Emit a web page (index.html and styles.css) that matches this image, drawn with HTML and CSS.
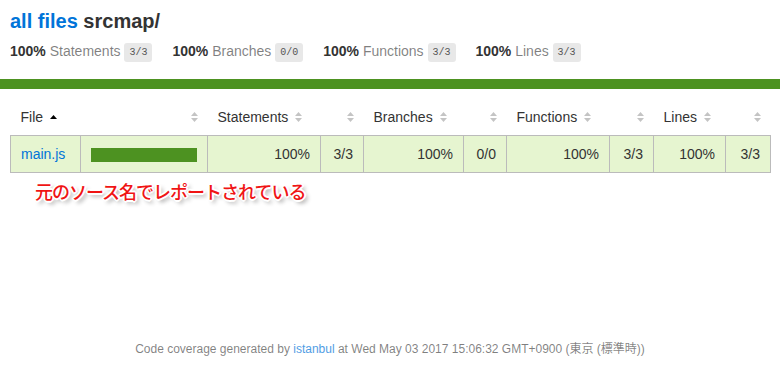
FILE: index.html
```html
<!DOCTYPE html>
<html lang="en">
<head>
    <meta charset="UTF-8">
    <title>Code coverage report for srcmap/</title>
    <link rel="stylesheet" href="styles.css">
</head>
<body>
    <div class="wrapper">
        <div class="pad1">
            <h1><a href="#">all files</a> srcmap/</h1>
            <div class="summary">
                <div class="summary-item"><span class="strong">100%</span> <span class="quiet">Statements</span> <span class="fraction">3/3</span></div>
                <div class="summary-item"><span class="strong">100%</span> <span class="quiet">Branches</span> <span class="fraction">0/0</span></div>
                <div class="summary-item"><span class="strong">100%</span> <span class="quiet">Functions</span> <span class="fraction">3/3</span></div>
                <div class="summary-item"><span class="strong">100%</span> <span class="quiet">Lines</span> <span class="fraction">3/3</span></div>
            </div>
        </div>
        <div class="status-line"></div>
        <div class="pad1">
            <table class="coverage-summary">
                <colgroup>
                    <col class="c-file"><col class="c-pic">
                    <col class="c-stmt"><col class="c-abs">
                    <col class="c-branch"><col class="c-abs">
                    <col class="c-func"><col class="c-abs2">
                    <col class="c-lines"><col class="c-abs3">
                </colgroup>
                <thead>
                    <tr>
                        <th class="file">File<span class="sorter"><svg width="7" height="10" viewBox="0 0 7 10"><path d="M3.5 3L7 7H0z" fill="#000"/></svg></span></th>
                        <th class="pic"><span class="sorter"><svg width="7" height="10" viewBox="0 0 7 10"><path d="M3.5 0L7 4H0zM0 6h7L3.5 10z" fill="#c4c4c4"/></svg></span></th>
                        <th class="pct">Statements<span class="sorter"><svg width="7" height="10" viewBox="0 0 7 10"><path d="M3.5 0L7 4H0zM0 6h7L3.5 10z" fill="#c4c4c4"/></svg></span></th>
                        <th class="abs"><span class="sorter"><svg width="7" height="10" viewBox="0 0 7 10"><path d="M3.5 0L7 4H0zM0 6h7L3.5 10z" fill="#c4c4c4"/></svg></span></th>
                        <th class="pct">Branches<span class="sorter"><svg width="7" height="10" viewBox="0 0 7 10"><path d="M3.5 0L7 4H0zM0 6h7L3.5 10z" fill="#c4c4c4"/></svg></span></th>
                        <th class="abs"><span class="sorter"><svg width="7" height="10" viewBox="0 0 7 10"><path d="M3.5 0L7 4H0zM0 6h7L3.5 10z" fill="#c4c4c4"/></svg></span></th>
                        <th class="pct">Functions<span class="sorter"><svg width="7" height="10" viewBox="0 0 7 10"><path d="M3.5 0L7 4H0zM0 6h7L3.5 10z" fill="#c4c4c4"/></svg></span></th>
                        <th class="abs"><span class="sorter"><svg width="7" height="10" viewBox="0 0 7 10"><path d="M3.5 0L7 4H0zM0 6h7L3.5 10z" fill="#c4c4c4"/></svg></span></th>
                        <th class="pct">Lines<span class="sorter"><svg width="7" height="10" viewBox="0 0 7 10"><path d="M3.5 0L7 4H0zM0 6h7L3.5 10z" fill="#c4c4c4"/></svg></span></th>
                        <th class="abs"><span class="sorter"><svg width="7" height="10" viewBox="0 0 7 10"><path d="M3.5 0L7 4H0zM0 6h7L3.5 10z" fill="#c4c4c4"/></svg></span></th>
                    </tr>
                </thead>
                <tbody>
                    <tr>
                        <td class="file"><a href="#">main.js</a></td>
                        <td class="pic"><div class="chart"><div class="cover-fill"></div></div></td>
                        <td class="pct">100%</td>
                        <td class="abs">3/3</td>
                        <td class="pct">100%</td>
                        <td class="abs">0/0</td>
                        <td class="pct">100%</td>
                        <td class="abs">3/3</td>
                        <td class="pct">100%</td>
                        <td class="abs">3/3</td>
                    </tr>
                </tbody>
            </table>
            <p class="note">元のソース名でレポートされている</p>
        </div>
    </div>
    <div class="footer">Code coverage generated by <a href="#">istanbul</a> at Wed May 03 2017 15:06:32 GMT+0900 (東京 (標準時))</div>
</body>
</html>
```

FILE: styles.css
```css
/* Base */
*, *:before, *:after {
    box-sizing: border-box;
}

body {
    margin: 0;
    min-height: 368px;
    display: flex;
    flex-direction: column;
    font-family: "Liberation Sans", Arial, "Noto Sans CJK JP", sans-serif;
    font-size: 14px;
    color: #333;
    background: #fff;
}

a {
    color: #0074D9;
    text-decoration: none;
}

h1 {
    font-size: 20px;
    margin: 0;
}

.pad1 {
    padding: 10px;
}

.strong {
    font-weight: bold;
}

.quiet {
    color: rgba(0, 0, 0, 0.5);
}

/* Summary */
.summary {
    display: flex;
}

.summary-item {
    padding: 10px 20px 10px 0;
}

.fraction {
    font-family: "Liberation Mono", monospace;
    font-size: 10px;
    color: #555;
    background: #e8e8e8;
    padding: 4px 5px;
    border-radius: 3px;
    vertical-align: middle;
}

.status-line {
    height: 10px;
    background: rgb(77, 146, 33);
}

/* Coverage table */
.coverage-summary {
    width: 100%;
    border-collapse: collapse;
    table-layout: fixed;
}

.c-file { width: 70px; }
.c-pic { width: 127px; }
.c-stmt { width: 113px; }
.c-abs { width: 43px; }
.c-branch { width: 100px; }
.c-func { width: 103px; }
.c-abs2 { width: 44px; }
.c-lines { width: 72px; }
.c-abs3 { width: 45px; }

.coverage-summary th,
.coverage-summary td {
    padding: 10px;
    white-space: nowrap;
}

.coverage-summary th {
    text-align: left;
    font-weight: normal;
}

.coverage-summary th.pic,
.coverage-summary th.abs,
.coverage-summary td.pct,
.coverage-summary td.abs {
    text-align: right;
}

.coverage-summary tbody {
    border: 1px solid #bbb;
}

.coverage-summary tbody tr {
    border-bottom: 1px solid #bbb;
}

.coverage-summary td {
    background: rgb(230, 245, 208);
    border-right: 1px solid #bbb;
}

.coverage-summary td:last-child {
    border-right: none;
}

.sorter {
    display: inline-block;
    width: 7px;
    height: 10px;
    margin-left: 0.5em;
}

.sorter svg {
    display: block;
}

.chart {
    line-height: 0;
    border: 1px solid rgb(77, 146, 33);
    margin-top: 2px;
}

.cover-fill {
    height: 12px;
    width: 100%;
    background: rgb(77, 146, 33);
}

/* Annotation */
.note {
    margin: 5px 0 0 25px;
    font-family: "Noto Sans CJK JP", sans-serif;
    font-size: 18px;
    letter-spacing: -1px;
    font-weight: 500;
    color: #f01414;
    text-shadow: 1px 1px 0 #fff, -1px -1px 0 #fff, 1px -1px 0 #fff, -1px 1px 0 #fff,
        2px 0 0 #fff, -2px 0 0 #fff, 0 2px 0 #fff, 0 -2px 0 #fff,
        3px 3px 4px rgba(0, 0, 0, 0.45);
}

/* Footer */
.footer {
    margin-top: auto;
    padding: 10px 20px 12px;
    text-align: center;
    font-size: 12px;
    color: rgba(0, 0, 0, 0.5);
}

.footer a {
    opacity: 0.7;
}
```
